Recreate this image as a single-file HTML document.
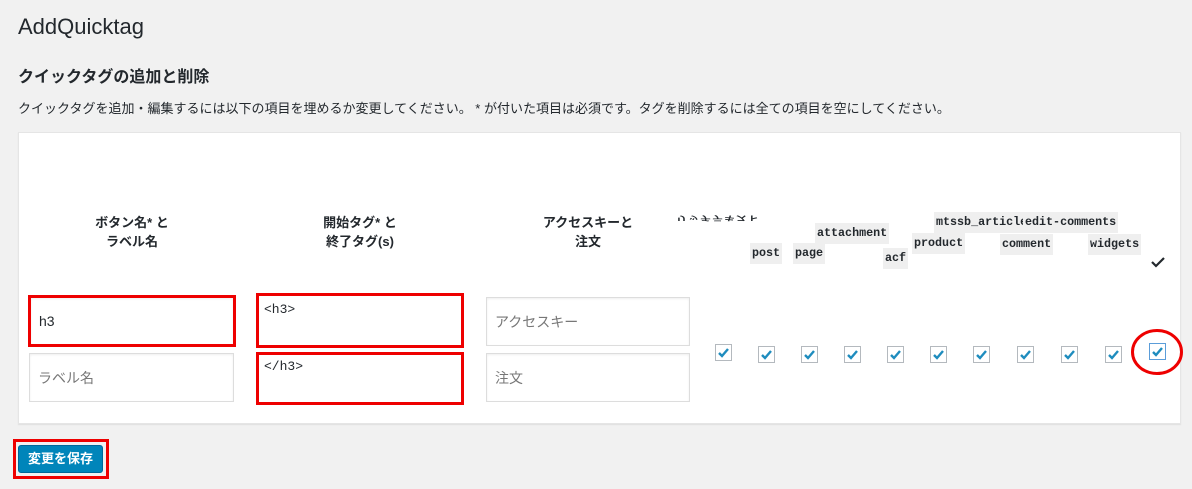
<!DOCTYPE html>
<html><head><meta charset="utf-8"><style>
body{margin:0;width:1192px;height:489px;background:#f1f1f1;font-family:"Liberation Sans","Noto Sans CJK JP",sans-serif;color:#23282d;position:relative;overflow:hidden}
.a{position:absolute}
h1{position:absolute;left:18px;top:14px;margin:0;font-size:22px;font-weight:400}
.panel{left:18px;top:132px;width:1163px;height:292px;background:#fff;box-shadow:0 1px 1px rgba(0,0,0,.08);border:1px solid #e5e5e5;box-sizing:border-box}
.th{font-size:13px;font-weight:700;text-align:center;line-height:19px}
.inp{background:#fff;border:1px solid #ddd;box-shadow:inset 0 1px 2px rgba(0,0,0,.07);box-sizing:border-box;font-size:14px;color:#777;padding-left:8px;display:flex;align-items:center}
.red{border:3px solid #e00;box-sizing:border-box}
.tag{font-family:"Liberation Mono",monospace;font-weight:700;font-size:11.7px;background:#efefef;padding:2px 2px;line-height:17px;color:#23282d}
.cb{width:15px;height:15px;border:1px solid #b4b9be;background:#fff;box-sizing:content-box}
.cb svg{display:block}
.mono{font-family:"Liberation Mono",monospace;font-size:13px;color:#23282d}
</style></head><body>
<h1>AddQuicktag</h1>
<div class="a" style="left:18px;top:63px;font-size:16px;font-weight:700">クイックタグの追加と削除</div>
<div class="a" style="left:18px;top:98px;font-size:13px">クイックタグを追加・編集するには以下の項目を埋めるか変更してください。 * が付いた項目は必須です。タグを削除するには全ての項目を空にしてください。</div>
<div class="a panel"></div>
<div class="a th" style="left:28px;top:213px;width:208px">ボタン名* と<br>ラベル名</div>
<div class="a th" style="left:256px;top:213px;width:208px">開始タグ* と<br>終了タグ(s)</div>
<div class="a th" style="left:486px;top:213px;width:204px">アクセスキーと<br>注文</div>
<div class="a" style="left:676px;top:212px;width:100px;height:14px;overflow:hidden;font-size:11px;font-weight:700;letter-spacing:1px;transform:scaleY(-0.6)">リッチテキスト</div>
<div class="a tag" style="left:750px;top:243px">post</div>
<div class="a tag" style="left:793px;top:243px">page</div>
<div class="a tag" style="left:815px;top:223px">attachment</div>
<div class="a tag" style="left:883px;top:248px">acf</div>
<div class="a tag" style="left:912px;top:233px">product</div>
<div class="a tag" style="left:934px;top:212px">mtssb_article</div>
<div class="a tag" style="left:1023px;top:212px">edit-comments</div>
<div class="a tag" style="left:1000px;top:234px">comment</div>
<div class="a tag" style="left:1088px;top:234px">widgets</div>
<svg class="a" style="left:1150px;top:255px" width="16" height="14"><path d="M2 7l4 4 8-8" stroke="#23282d" stroke-width="2.2" fill="none"/></svg>

<div class="a inp red" style="left:28px;top:295px;width:208px;height:52px;color:#23282d">h3</div>
<div class="a inp" style="left:29px;top:353px;width:205px;height:49px">ラベル名</div>
<div class="a red" style="left:256px;top:293px;width:208px;height:55px;background:#fff"><div class="mono" style="padding:6px 5px">&lt;h3&gt;</div></div>
<div class="a red" style="left:256px;top:352px;width:208px;height:53px;background:#fff"><div class="mono" style="padding:4px 5px">&lt;/h3&gt;</div></div>
<div class="a inp" style="left:486px;top:297px;width:204px;height:49px">アクセスキー</div>
<div class="a inp" style="left:486px;top:353px;width:204px;height:49px">注文</div>

<div class="a cb" style="left:715px;top:344px"><svg width="15" height="15"><path d="M3 8l3 3 6-7" stroke="#1e8cbe" stroke-width="2.4" fill="none"/></svg></div>
<div class="a cb" style="left:758px;top:346px"><svg width="15" height="15"><path d="M3 8l3 3 6-7" stroke="#1e8cbe" stroke-width="2.4" fill="none"/></svg></div>
<div class="a cb" style="left:801px;top:346px"><svg width="15" height="15"><path d="M3 8l3 3 6-7" stroke="#1e8cbe" stroke-width="2.4" fill="none"/></svg></div>
<div class="a cb" style="left:844px;top:346px"><svg width="15" height="15"><path d="M3 8l3 3 6-7" stroke="#1e8cbe" stroke-width="2.4" fill="none"/></svg></div>
<div class="a cb" style="left:887px;top:346px"><svg width="15" height="15"><path d="M3 8l3 3 6-7" stroke="#1e8cbe" stroke-width="2.4" fill="none"/></svg></div>
<div class="a cb" style="left:930px;top:346px"><svg width="15" height="15"><path d="M3 8l3 3 6-7" stroke="#1e8cbe" stroke-width="2.4" fill="none"/></svg></div>
<div class="a cb" style="left:973px;top:346px"><svg width="15" height="15"><path d="M3 8l3 3 6-7" stroke="#1e8cbe" stroke-width="2.4" fill="none"/></svg></div>
<div class="a cb" style="left:1017px;top:346px"><svg width="15" height="15"><path d="M3 8l3 3 6-7" stroke="#1e8cbe" stroke-width="2.4" fill="none"/></svg></div>
<div class="a cb" style="left:1061px;top:346px"><svg width="15" height="15"><path d="M3 8l3 3 6-7" stroke="#1e8cbe" stroke-width="2.4" fill="none"/></svg></div>
<div class="a cb" style="left:1105px;top:346px"><svg width="15" height="15"><path d="M3 8l3 3 6-7" stroke="#1e8cbe" stroke-width="2.4" fill="none"/></svg></div>
<div class="a cb" style="left:1149px;top:343px;border-color:#5b9dd9"><svg width="15" height="15"><path d="M3 8l3 3 6-7" stroke="#1e8cbe" stroke-width="2.4" fill="none"/></svg></div>
<svg class="a" style="left:1130px;top:328px" width="54" height="50"><ellipse cx="27" cy="24" rx="24.5" ry="21.5" stroke="#e00" stroke-width="3" fill="none"/></svg>

<div class="a red" style="left:13px;top:439px;width:96px;height:40px"></div>
<div class="a" style="left:18px;top:445px;width:85px;height:28px;background:#0085ba;border:1px solid #006799;box-sizing:border-box;border-radius:3px;color:#fff;font-size:13px;font-weight:700;text-align:center;line-height:26px">変更を保存</div>
</body></html>
